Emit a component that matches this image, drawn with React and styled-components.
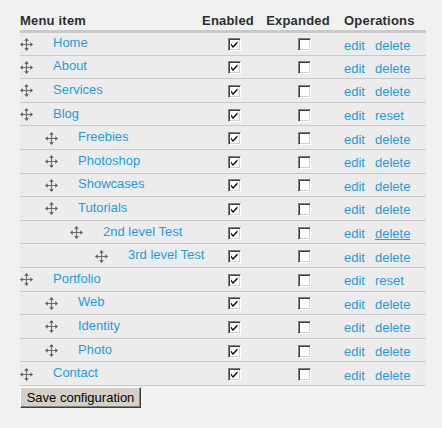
import styled, { createGlobalStyle } from "styled-components";

const GlobalStyle = createGlobalStyle`
  body {
    margin: 0;
    background: #f1f1f1;
    font-family: "Liberation Sans", Arial, sans-serif;
    font-size: 13px;
    color: #222;
  }
`;

const items = [
  { title: "Home", depth: 0 },
  { title: "About", depth: 0 },
  { title: "Services", depth: 0 },
  { title: "Blog", depth: 0, reset: true },
  { title: "Freebies", depth: 1 },
  { title: "Photoshop", depth: 1 },
  { title: "Showcases", depth: 1 },
  { title: "Tutorials", depth: 1 },
  { title: "2nd level Test", depth: 2, hover: true },
  { title: "3rd level Test", depth: 3 },
  { title: "Portfolio", depth: 0, reset: true },
  { title: "Web", depth: 1 },
  { title: "Identity", depth: 1 },
  { title: "Photo", depth: 1 },
  { title: "Contact", depth: 0 },
];

const Handle = () => (
  <HandleIcon width="13" height="13" viewBox="0 0 13 13">
    <path d="M6.5 1.5v10M1.5 6.5h10" fill="none" stroke="#6e6e6e" strokeWidth="1.2" />
    <g fill="#5e5e5e">
      <path d="M6.5 0L4.2 2.7h4.6z" />
      <path d="M6.5 13L4.2 10.3h4.6z" />
      <path d="M0 6.5L2.7 4.2v4.6z" />
      <path d="M13 6.5L10.3 4.2v4.6z" />
    </g>
  </HandleIcon>
);

const Checkbox = ({ checked }) => (
  <Box>
    {checked && (
      <svg width="9" height="9" viewBox="0 0 9 9">
        <path d="M1 3.5l2 2.5L7.5 1.2v2L3 8 1 5.5z" fill="#000" />
      </svg>
    )}
  </Box>
);

export default function App() {
  return (
    <>
      <GlobalStyle />
      <Page>
        <Table>
          <thead>
            <tr>
              <Th>Menu item</Th>
              <Th $center>Enabled</Th>
              <Th $center>Expanded</Th>
              <Th $ops>Operations</Th>
            </tr>
          </thead>
          <tbody>
            {items.map((it) => (
              <Row key={it.title}>
                <TitleCell>
                  <Indent $depth={it.depth}>
                    <Handle />
                    <ItemLink>{it.title}</ItemLink>
                  </Indent>
                </TitleCell>
                <BoxCell>
                  <Checkbox checked />
                </BoxCell>
                <BoxCell>
                  <Checkbox />
                </BoxCell>
                <OpsCell>
                  <Ops>
                    <ItemLink>edit</ItemLink>
                    <ItemLink $hover={it.hover}>{it.reset ? "reset" : "delete"}</ItemLink>
                  </Ops>
                </OpsCell>
              </Row>
            ))}
          </tbody>
        </Table>
        <SaveButton>Save configuration</SaveButton>
      </Page>
    </>
  );
}

const Page = styled.div`
  padding: 13px 16px 0 20px;
`;

const Table = styled.table`
  width: 406px;
  border-collapse: collapse;
  table-layout: fixed;

  th:nth-child(1) {
    width: 176px;
  }
  th:nth-child(2) {
    width: 64px;
  }
  th:nth-child(3) {
    width: 76px;
  }
`;

const Th = styled.th`
  font-weight: bold;
  color: #2e2e2e;
  line-height: 15px;
  letter-spacing: 0.2px;
  padding: 0 0 2px ${(p) => (p.$ops ? "8px" : "0")};
  text-align: ${(p) => (p.$center ? "center" : "left")};
  border-bottom: 3px solid #c9c9c9;
  white-space: nowrap;
`;

const Row = styled.tr`
  height: 23.6px;
  background: #ececec;
  border-bottom: 1px solid #c9c9c9;
`;

const TitleCell = styled.td`
  padding: 0 0 2px;
  line-height: 15px;
  white-space: nowrap;
`;

const Indent = styled.div`
  display: flex;
  align-items: center;
  gap: 20px;
  padding-left: ${(p) => p.$depth * 25}px;
`;

const HandleIcon = styled.svg`
  display: block;
  flex: none;
  margin-top: 3px;
`;

const ItemLink = styled.a`
  color: #1e9cdc;
  text-decoration: ${(p) => (p.$hover ? "underline" : "none")};
  cursor: pointer;
`;

const BoxCell = styled.td`
  padding: 0 0 0 12px;
  text-align: center;
`;

const Box = styled.span`
  display: inline-flex;
  align-items: center;
  justify-content: center;
  width: 13px;
  height: 13px;
  box-sizing: border-box;
  vertical-align: middle;
  background: #fff;
  border-top: 1px solid #808080;
  border-left: 1px solid #808080;
  border-bottom: 1px solid #fff;
  border-right: 1px solid #fff;
  box-shadow: inset 1px 1px 0 #404040, inset -1px -1px 0 #d4d0c8;
`;

const OpsCell = styled.td`
  padding: 0 0 0 8px;
  line-height: 15px;
`;

const Ops = styled.div`
  display: flex;
  gap: 10px;
  padding-top: 3px;
`;

const SaveButton = styled.button`
  display: block;
  margin-top: 1px;
  width: 121px;
  height: 21px;
  padding: 0;
  font-family: "Liberation Sans", Arial, sans-serif;
  font-size: 13px;
  color: #000;
  background: #d4d0c8;
  border: 1px solid;
  border-color: #fff #404040 #404040 #fff;
  box-shadow: inset -1px -1px 0 #808080;
`;
